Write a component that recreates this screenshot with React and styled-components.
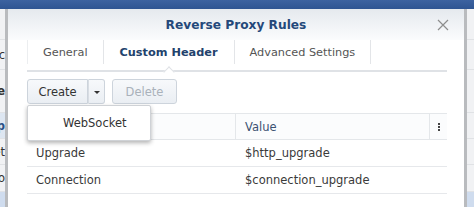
import React from 'react';
import styled, { createGlobalStyle } from 'styled-components';

const GlobalStyle = createGlobalStyle`
  html, body {
    margin: 0;
    padding: 0;
    background: #ededed;
    font-family: "DejaVu Sans", Verdana, sans-serif;
    overflow: hidden;
  }
`;

const Page = styled.div`
  width: 474px;
  height: 207px;
  display: flex;
  flex-direction: column;
  overflow: hidden;
`;

const TopBar = styled.div`
  height: 9px;
  flex: none;
  background: linear-gradient(#3c62a0, #2f5592);
`;

const Stage = styled.div`
  flex: 1;
  display: flex;
  min-height: 0;
`;

const BackWindow = styled.div`
  width: ${p => p.w}px;
  box-sizing: border-box;
  flex: none;
  display: flex;
  flex-direction: column;
  background: #f1f2f4;
  border-${p => p.edge}: 3px solid #b9bbbe;
  overflow: hidden;
`;

const BackRow = styled.div`
  height: ${p => p.h}px;
  flex: none;
  display: flex;
  align-items: center;
  justify-content: flex-end;
  white-space: nowrap;
  font-size: 11.5px;
  font-weight: ${p => (p.bold ? 700 : 400)};
  color: ${p => (p.blue ? '#2b4f86' : '#333')};
  background: ${p => (p.hl ? '#dde6f1' : 'transparent')};
  border-bottom: 1px solid #e0e2e5;
  box-sizing: border-box;
`;

const BackTail = styled.div`
  flex: 1;
  background: #cfdcee;
`;

const Dialog = styled.div`
  width: 456px;
  flex: none;
  display: flex;
  flex-direction: column;
  background: #fff;
`;

const Header = styled.div`
  height: 31px;
  flex: none;
  display: flex;
  align-items: center;
  justify-content: center;
  position: relative;
  background: linear-gradient(#e5e9ee, #fbfcfd);
`;

const Title = styled.div`
  font-size: 12.2px;
  font-weight: 700;
  color: #24487a;
  padding-top: 1px;
`;

const Close = styled.svg`
  position: absolute;
  right: 15px;
  top: 10px;
`;

const Body = styled.div`
  padding: 0 17px 0 19px;
  display: flex;
  flex-direction: column;
`;

const Tabs = styled.div`
  display: flex;
  padding-bottom: 6px;
  border-bottom: 2px solid #dfe2e6;
  position: relative;
`;

const Tab = styled.div`
  height: 24px;
  display: flex;
  align-items: center;
  padding: 0 ${p => p.pad}px;
  font-size: 11.3px;
  font-weight: ${p => (p.active ? 700 : 400)};
  color: ${p => (p.active ? '#22426c' : '#555')};
  border-right: 1px solid #e3e5e8;
  border-left: ${p => (p.first ? '1px solid #eceef0' : 'none')};
  position: relative;
`;

const Notch = styled.div`
  position: absolute;
  left: 61px;
  bottom: -12px;
  width: 7px;
  height: 7px;
  background: #fff;
  border-left: 1px solid #dfe2e6;
  border-top: 1px solid #dfe2e6;
  transform: rotate(45deg);
`;

const Toolbar = styled.div`
  margin-top: 7px;
  display: flex;
  gap: 7px;
  position: relative;
`;

const Btn = styled.div`
  height: 25px;
  box-sizing: border-box;
  display: flex;
  align-items: center;
  justify-content: center;
  width: ${p => p.w}px;
  font-size: 11.5px;
  color: ${p => (p.disabled ? '#a9b1ba' : '#333')};
  background: linear-gradient(#f7f9fb, #eaeef3);
  border: 1px solid #cdd4dc;
  border-radius: ${p => p.radius};
  border-left: ${p => (p.joined ? '1px solid #d8dde3' : '1px solid #cdd4dc')};
`;

const Split = styled.div`
  display: flex;
`;

const Caret = styled.span`
  width: 0;
  height: 0;
  border-left: 3px solid transparent;
  border-right: 3px solid transparent;
  border-top: 3px solid #333;
  margin-top: 1px;
`;

const Menu = styled.div`
  position: absolute;
  left: 0;
  top: 26px;
  width: 124px;
  height: 36px;
  box-sizing: border-box;
  background: #fff;
  border: 1px solid #cfd2d6;
  border-radius: 2px;
  box-shadow: 0 2px 4px rgba(0, 0, 0, 0.3);
  display: flex;
  align-items: center;
  padding-left: 35px;
  font-size: 11.5px;
  color: #333;
  z-index: 2;
`;

const Table = styled.div`
  margin-top: 9px;
  display: grid;
  grid-template-columns: 209px 1fr 17px;
  border-top: 1px solid #e4e7ea;
`;

const HeadCell = styled.div`
  height: 25px;
  display: flex;
  align-items: center;
  justify-content: ${p => (p.center ? 'center' : 'flex-start')};
  padding-left: ${p => (p.center ? 0 : 9)}px;
  font-size: 11.5px;
  color: #3b5272;
  background: #fbfcfd;
  border-bottom: 1px solid #e4e7ea;
  border-right: ${p => (p.sep ? '1px solid #e4e7ea' : 'none')};
`;

const Cell = styled.div`
  height: 26px;
  display: flex;
  align-items: center;
  padding-left: 9px;
  font-size: 11.5px;
  color: #3a3a3a;
  border-bottom: 1px solid #e6e8eb;
  grid-column: ${p => p.span || 'auto'};
`;

const Kebab = styled.span`
  display: flex;
  flex-direction: column;
  gap: 1px;
  & > i {
    width: 2px;
    height: 2px;
    background: #444;
  }
`;

const backRows = [
  { h: 31, t: '' },
  { h: 30, t: 'Basic' },
  { h: 43, t: 'Delete', bold: true },
  { h: 26, t: 'Tip', bold: true, blue: true, hl: true },
  { h: 26, t: 'Socket' },
  { h: 27, t: 'Proto' },
];

const rows = [
  ['Upgrade', '$http_upgrade'],
  ['Connection', '$connection_upgrade'],
];

export default function App() {
  return (
    <Page>
      <GlobalStyle />
      <TopBar />
      <Stage>
        <BackWindow w={8} edge="right">
          {backRows.map((r, i) => (
            <BackRow key={i} h={r.h} bold={r.bold} blue={r.blue} hl={r.hl}>
              {r.t}
            </BackRow>
          ))}
          <BackTail />
        </BackWindow>
        <Dialog>
          <Header>
            <Title>Reverse Proxy Rules</Title>
            <Close width="12" height="12" viewBox="0 0 12 12">
              <path d="M1 1L11 11M11 1L1 11" stroke="#8d8d8d" strokeWidth="1.2" fill="none" />
            </Close>
          </Header>
          <Body>
            <Tabs>
              <Tab first pad={15}>General</Tab>
              <Tab active pad={16}>
                Custom Header
                <Notch />
              </Tab>
              <Tab pad={15}>Advanced Settings</Tab>
            </Tabs>
            <Toolbar>
              <Split>
                <Btn w={61} radius="3px 0 0 3px">Create</Btn>
                <Btn w={17} joined radius="0 3px 3px 0">
                  <Caret />
                </Btn>
              </Split>
              <Btn w={65} disabled radius="3px">Delete</Btn>
              <Menu>WebSocket</Menu>
            </Toolbar>
            <Table>
              <HeadCell sep />
              <HeadCell sep>Value</HeadCell>
              <HeadCell center>
                <Kebab><i /><i /><i /></Kebab>
              </HeadCell>
              {rows.map(([k, v]) => (
                <React.Fragment key={k}>
                  <Cell>{k}</Cell>
                  <Cell span="span 2">{v}</Cell>
                </React.Fragment>
              ))}
            </Table>
          </Body>
        </Dialog>
        <BackWindow w={10} edge="left">
          {backRows.map((r, i) => (
            <BackRow key={i} h={r.h} />
          ))}
          <BackTail />
        </BackWindow>
      </Stage>
    </Page>
  );
}
